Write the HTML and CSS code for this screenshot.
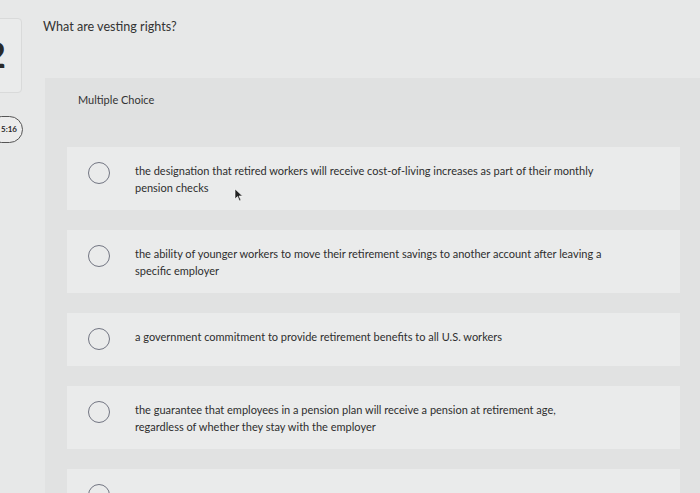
FILE: index.html
```html
<!DOCTYPE html>
<html>
<head>
<meta charset="utf-8">
<link rel="stylesheet" href="styles.css">
</head>
<body>
<div class="page">
  <aside class="rail">
    <div class="qcard">
      <span class="qnum">2</span>
    </div>
    <div class="timer">5:16</div>
  </aside>
  <main class="main">
    <h1 class="question">What are vesting rights?</h1>
    <section class="panel">
      <div class="panel-head">Multiple Choice</div>
      <ul class="options">
        <li class="option"><span class="radio"></span><span class="label">the designation that retired workers will receive cost-of-living increases as part of their monthly pension checks</span></li>
        <li class="option"><span class="radio"></span><span class="label">the ability of younger workers to move their retirement savings to another account after leaving a specific employer</span></li>
        <li class="option"><span class="radio"></span><span class="label">a government commitment to provide retirement benefits to all U.S. workers</span></li>
        <li class="option"><span class="radio"></span><span class="label">the guarantee that employees in a pension plan will receive a pension at retirement age, regardless of whether they stay with the employer</span></li>
        <li class="option"><span class="radio"></span><span class="label"></span></li>
      </ul>
    </section>
  </main>
  <svg class="cursor" width="10" height="14" viewBox="0 0 10 14"><path d="M1 1 L1 11 L3.5 8.5 L5.5 13 L7 12.3 L5 8 L8.5 8 Z" fill="#222" stroke="#fff" stroke-width="0.6"/></svg>
</div>
</body>
</html>
```

FILE: styles.css
```css
html, body {
  margin: 0;
  padding: 0;
}
body {
  background: #e7e8e8;
  font-family: "Lato", "Liberation Sans", sans-serif;
  color: #333;
  overflow: hidden;
}
.page {
  position: relative;
  display: flex;
  width: 700px;
  height: 493px;
  overflow: hidden;
}
.rail {
  flex: none;
  width: 23px;
  overflow: hidden;
}
.qcard {
  margin-top: 18px;
  margin-left: -10px;
  height: 75px;
  width: 32px;
  background: #eaebeb;
  border: 1px solid #d9dada;
  border-radius: 4px;
  position: relative;
  box-sizing: border-box;
  overflow: hidden;
}
.qnum {
  position: absolute;
  left: -6px;
  top: 17px;
  font-size: 36px;
  font-weight: 700;
  line-height: 36px;
  color: #2a2a2a;
}
.timer {
  margin-top: 23px;
  margin-left: -12px;
  width: 35px;
  height: 27px;
  box-sizing: border-box;
  border: 1px solid #555;
  border-radius: 14px;
  background: #ececec;
  font-size: 8px;
  font-weight: 700;
  line-height: 25px;
  text-align: right;
  padding-right: 5px;
  color: #2a2a2a;
}
.main {
  flex: 1;
  padding-left: 20px;
}
.question {
  margin: 19px 0 0;
  font-size: 12.6px;
  font-weight: 400;
  line-height: 16px;
  color: #333;
}
.panel {
  margin-top: 43px;
  margin-left: 2px;
  background: #e1e2e2;
  padding: 0 20px 0 22px;
  height: 500px;
}
.panel-head {
  height: 42px;
  padding: 15px 0 0 33px;
  box-sizing: border-box;
  font-size: 11px;
  line-height: 14px;
  color: #333;
  margin: 0 -20px 0 -22px;
  background: #e0e1e1;
}
.options {
  list-style: none;
  margin: 0;
  padding: 27px 0 0;
  display: flex;
  flex-direction: column;
  gap: 20px;
}
.option {
  display: flex;
  align-items: flex-start;
  background: #eaebeb;
  padding: 15px 0 14px 21px;
}
.radio {
  flex: none;
  width: 22px;
  height: 22px;
  box-sizing: border-box;
  border: 1.5px solid #727582;
  border-radius: 50%;
  margin-bottom: 2px;
  margin-right: 25px;
}
.label {
  max-width: 468px;
  font-size: 11px;
  line-height: 17px;
  color: #2e2e2e;
}
.cursor {
  position: absolute;
  left: 234px;
  top: 188px;
}
```
